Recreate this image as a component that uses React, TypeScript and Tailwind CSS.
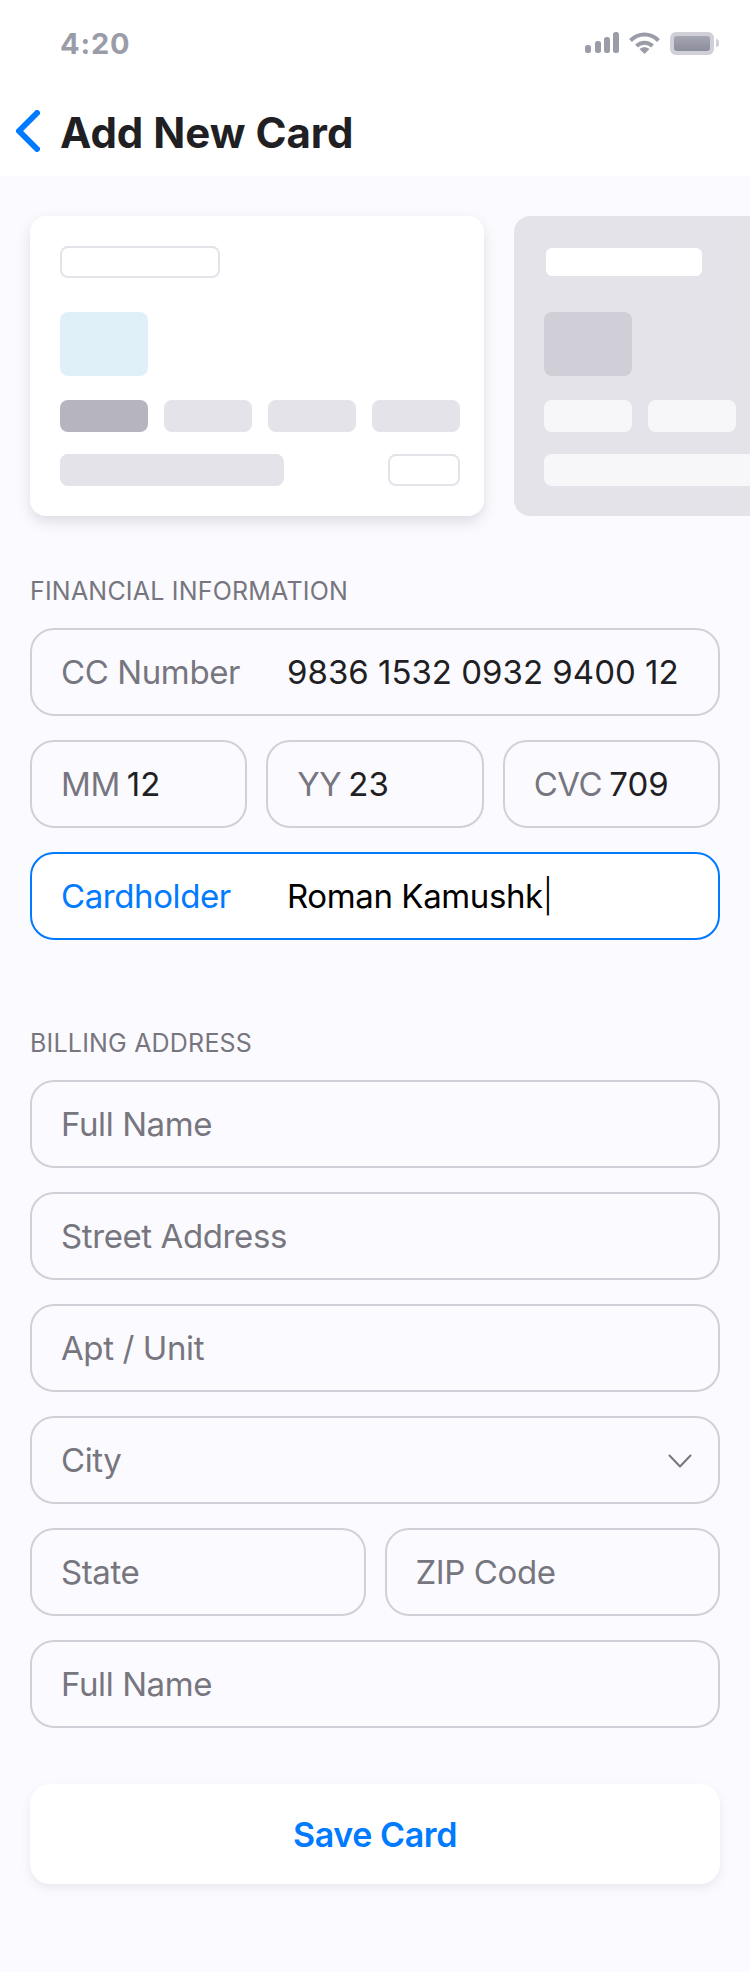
interface FieldProps {
  label: string
  value?: string
  className?: string
}

// label + value on one line, label column is fixed on the wide rows
function Field({ label, value, className = "" }: FieldProps) {
  return (
    <div className={`flex h-[88px] items-center rounded-[24px] border-2 border-[#d1d0d8] pl-[29px] pt-[2px] text-[33px] tracking-[-0.4px] ${className}`}>
      <span className="text-[#77767f]">{label}</span>
      {value && <span className="ml-[7px] tracking-normal text-[#1f1f24]">{value}</span>}
    </div>
  )
}

function WideField({ label, value }: FieldProps) {
  return (
    <div className="flex h-[88px] items-center rounded-[24px] border-2 border-[#d1d0d8] pl-[29px] pt-[2px] text-[33px] tracking-[-0.4px]">
      <span className="w-[226px] text-[#77767f]">{label}</span>
      <span className="tracking-normal text-[#1f1f24]">{value}</span>
    </div>
  )
}

function SectionLabel({ children, className = "" }: { children: string; className?: string }) {
  return <div className={`mb-[23px] h-[28px] text-[25px] leading-[28px] tracking-[0.2px] text-[#77767f] ${className}`}>{children}</div>
}

function StatusIcons() {
  return (
    <div className="flex items-center gap-[10px]">
      <svg width="34" height="22" viewBox="0 0 34 22" className="text-[#9a9ca8]" fill="currentColor">
        <rect x="0" y="13" width="6" height="8" rx="2.5" />
        <rect x="10" y="9" width="6" height="12" rx="2.5" />
        <rect x="19" y="5" width="6" height="16" rx="2.5" />
        <rect x="28" y="0" width="6" height="21" rx="2.5" />
      </svg>
      <svg width="31" height="22" viewBox="0 0 31 22" fill="none" stroke="#9a9ca8" strokeWidth="4">
        <path d="M1.5 8.5C9.5 0.5 21.5 0.5 29.5 8.5" />
        <path d="M7.5 14C12 9.6 19 9.6 23.5 14" />
        <path d="M10.5 17L15.5 22L20.5 17C17.5 14.8 13.5 14.8 10.5 17Z" fill="#9a9ca8" stroke="none" />
      </svg>
      <div className="flex items-center gap-[2px]">
        <div className="flex h-[23px] w-[44px] items-center justify-center rounded-[6px] bg-[#d1d0d8]">
          <div className="h-[15px] w-[36px] rounded-[3px] bg-gradient-to-b from-[#a5a6b2] to-[#8d8e9b]" />
        </div>
        <div className="h-[8px] w-[3px] rounded-r-full bg-[#d1d0d8]" />
      </div>
    </div>
  )
}

export default function App() {
  return (
    <div className="flex min-h-[1972px] w-[750px] flex-col bg-[#fbfbff] font-['Inter',sans-serif]">
      {/* Status bar + title */}
      <div className="h-[176px] bg-white">
        <div className="flex h-[86px] items-center justify-between pl-[60px] pr-[31px]">
          <span className="text-[29px] font-bold leading-none tracking-[0.8px] text-[#9a9ca8]">4:20</span>
          <StatusIcons />
        </div>
        <div className="flex h-[90px] items-center pl-[16px]">
          <svg width="24" height="42" viewBox="0 0 24 42" fill="none" stroke="#007aff" strokeWidth="6" strokeLinecap="round" strokeLinejoin="round">
            <path d="M21 3L3 21L21 39" />
          </svg>
          <h1 className="ml-[20px] mt-[3px] text-[42px] font-bold leading-none tracking-normal text-[#1f1f24]">Add New Card</h1>
        </div>
      </div>

      {/* Card chooser */}
      <div className="flex gap-[30px] overflow-hidden pt-[40px] pb-[20px] pl-[30px]">
        <div className="h-[300px] w-[454px] shrink-0 rounded-[16px] bg-white py-[30px] pl-[30px] pr-[24px] shadow-[0_6px_14px_rgba(60,60,90,0.16)]">
          <div className="h-[32px] w-[160px] rounded-[8px] border-2 border-[#e5e3ea] bg-white" />
          <div className="mt-[34px] h-[64px] w-[88px] rounded-[8px] bg-[#dff0f9]" />
          <div className="mt-[24px] flex gap-[16px]">
            <div className="h-[32px] w-[88px] rounded-[8px] bg-[#b6b4be]" />
            <div className="h-[32px] w-[88px] rounded-[8px] bg-[#e5e3ea]" />
            <div className="h-[32px] w-[88px] rounded-[8px] bg-[#e5e3ea]" />
            <div className="h-[32px] w-[88px] rounded-[8px] bg-[#e5e3ea]" />
          </div>
          <div className="mt-[22px] flex justify-between">
            <div className="h-[32px] w-[224px] rounded-[8px] bg-[#e5e3ea]" />
            <div className="h-[32px] w-[72px] rounded-[8px] border-2 border-[#e5e3ea] bg-white" />
          </div>
        </div>
        <div className="h-[300px] w-[454px] shrink-0 rounded-[16px] bg-[#e5e3ea] py-[30px] pl-[30px]">
          <div className="ml-[2px] mt-[2px] h-[28px] w-[156px] rounded-[6px] bg-white" />
          <div className="mt-[36px] h-[64px] w-[88px] rounded-[8px] bg-[#d0cfd8]" />
          <div className="mt-[24px] flex gap-[16px]">
            <div className="h-[32px] w-[88px] rounded-[8px] bg-[#f7f7f9]" />
            <div className="h-[32px] w-[88px] rounded-[8px] bg-[#f7f7f9]" />
          </div>
          <div className="mt-[22px] h-[32px] w-[300px] rounded-[8px] bg-[#f7f7f9]" />
        </div>
      </div>

      <div className="flex flex-col px-[30px]">
        <SectionLabel className="mt-[41px]">FINANCIAL INFORMATION</SectionLabel>
        <div className="flex flex-col gap-[24px]">
          <WideField label="CC Number" value="9836 1532 0932 9400 12" />
          <div className="grid grid-cols-3 gap-[19px]">
            <Field label="MM" value="12" />
            <Field label="YY" value="23" />
            <Field label="CVC" value="709" />
          </div>
          <div className="flex h-[88px] items-center rounded-[24px] border-2 border-[#007aff] bg-white pl-[29px] pt-[2px] text-[33px] tracking-[-0.4px]">
            <span className="w-[226px] text-[#007aff]">Cardholder</span>
            <span className="text-black">Roman Kamushk<span className="font-light">|</span></span>
          </div>
        </div>

        <SectionLabel className="mt-[89px]">BILLING ADDRESS</SectionLabel>
        <div className="flex flex-col gap-[24px]">
          <Field label="Full Name" />
          <Field label="Street Address" />
          <Field label="Apt / Unit" />
          <div className="flex h-[88px] items-center justify-between rounded-[24px] border-2 border-[#d1d0d8] pl-[29px] pr-[26px] pt-[2px] text-[33px] tracking-[-0.4px] text-[#77767f]">
            <span>City</span>
            <svg width="24" height="14" viewBox="0 0 24 14" fill="none" stroke="#77767f" strokeWidth="2" strokeLinecap="round" strokeLinejoin="round">
              <path d="M1.5 1.5L12 12.5L22.5 1.5" />
            </svg>
          </div>
          <div className="grid grid-cols-2 gap-[19px]">
            <Field label="State" />
            <Field label="ZIP Code" />
          </div>
          <Field label="Full Name" />
        </div>

        <button className="mt-[56px] h-[100px] w-full rounded-[20px] bg-white text-[34px] font-semibold tracking-[-0.4px] text-[#007aff] shadow-[0_4px_10px_rgba(60,60,90,0.1)]">
          Save Card
        </button>
      </div>
    </div>
  )
}
